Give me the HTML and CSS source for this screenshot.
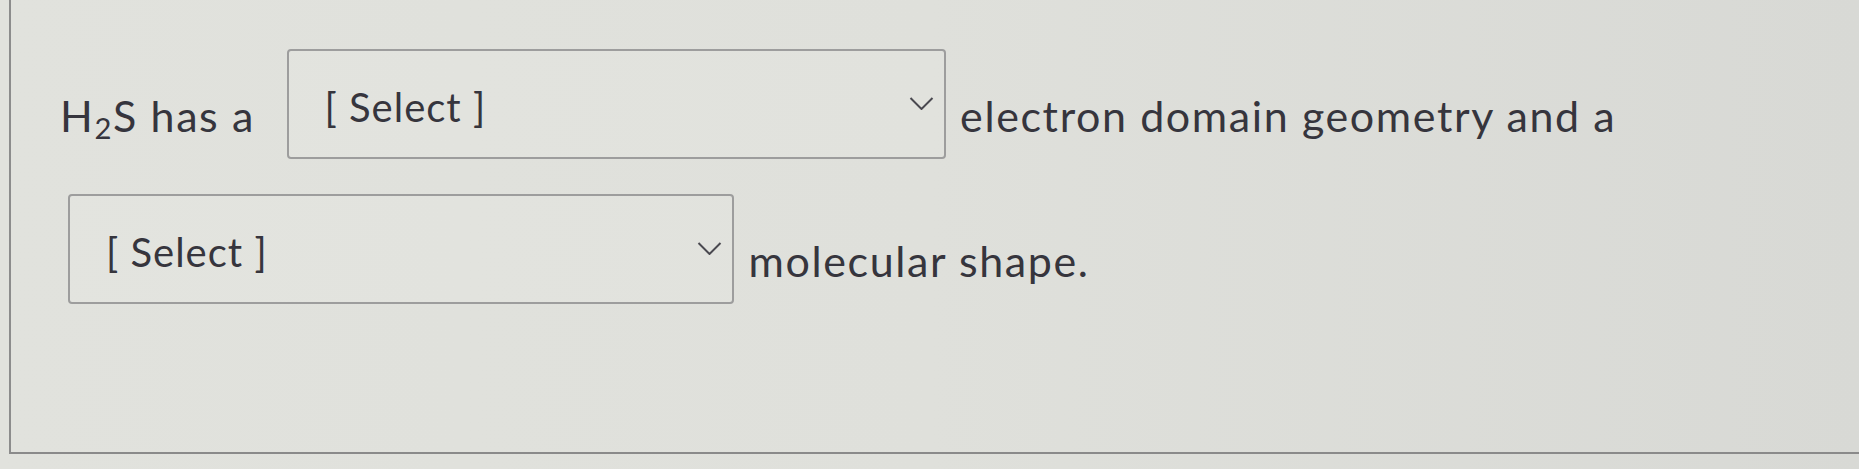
FILE: index.html
```html
<!DOCTYPE html>
<html lang="en">
<head>
    <meta charset="UTF-8">
    <meta name="viewport" content="width=device-width, initial-scale=1.0">
    <title>Question</title>
    <link rel="stylesheet" href="styles.css">
</head>
<body>
    <div class="question-panel">
        <p class="question-text">
            H<sub>2</sub>S has a
            <span class="dropdown">
                <span class="dropdown-label">[ Select ]</span>
                <svg class="chevron" viewBox="0 0 24 13" aria-hidden="true"><path d="M1 1 L12 12 L23 1"/></svg>
            </span>
            electron domain geometry and a
            <span class="dropdown dropdown-wide">
                <span class="dropdown-label">[ Select ]</span>
                <svg class="chevron" viewBox="0 0 24 13" aria-hidden="true"><path d="M1 1 L12 12 L23 1"/></svg>
            </span>
            molecular shape.
        </p>
    </div>
</body>
</html>
```

FILE: styles.css
```css
html, body {
    margin: 0;
    height: 100%;
}
body {
    font-family: Lato, "Open Sans", sans-serif;
    color: #36353d;
    background: linear-gradient(90deg, #e1e2dd 0%, #dfe0db 50%, #d8d9d5 100%);
    overflow: hidden;
}
.question-panel {
    margin-left: 9px;
    height: 454px;
    border-left: 2px solid #8c8c8c;
    border-bottom: 2px solid #8a8a8a;
    padding: 43px 0 0 49px;
    box-sizing: border-box;
}
.question-text {
    margin: 0;
    font-size: 43px;
    letter-spacing: 1.6px;
    line-height: 145px;
}
.question-text sub {
    font-size: 0.68em;
    line-height: 0;
    vertical-align: -0.24em;
}
.dropdown {
    position: relative;
    display: inline-block;
    vertical-align: 10px;
    width: 659px;
    height: 110px;
    margin: 0 2px 0 19px;
    padding: 32px 0 0 36px;
    box-sizing: border-box;
    border: 2px solid #9d9d9d;
    border-radius: 4px;
    background: rgba(255, 255, 255, 0.08);
    font-size: 40px;
    letter-spacing: 1px;
    line-height: 48px;
}
.dropdown-wide {
    width: 666px;
    margin-left: 8px;
    padding-left: 36px;
}
.chevron {
    position: absolute;
    right: 10px;
    top: 46px;
    width: 25px;
    height: 13px;
    fill: none;
    stroke: #4a4950;
    stroke-width: 2;
}
```
